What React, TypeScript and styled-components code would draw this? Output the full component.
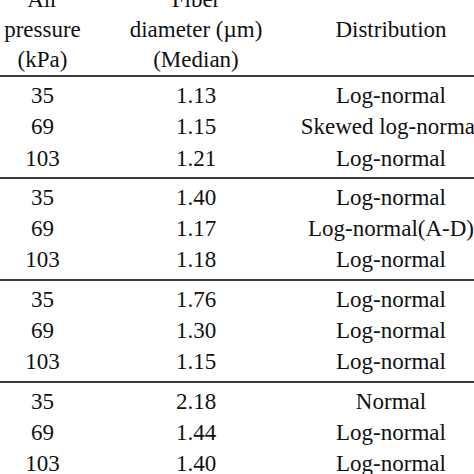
import styled, { createGlobalStyle } from "styled-components";

const GlobalStyle = createGlobalStyle`
  html, body {
    margin: 0;
    padding: 0;
    background: #ffffff;
    overflow: hidden;
  }
`;

const cols = "85px 222px 168px";

const Table = styled.div`
  width: 474px;
  height: 474px;
  overflow: hidden;
  display: flex;
  flex-direction: column;
  font-family: "Liberation Serif", "Times New Roman", Times, serif;
  color: #111111;
`;

const Header = styled.div`
  display: grid;
  grid-template-columns: ${cols};
  margin-top: -15px;
  height: 90px;
  border-bottom: 2px solid #3a3a3a;
  font-size: 23px;
  line-height: 30px;
`;

const HeadCell = styled.div`
  display: flex;
  flex-direction: column;
  align-items: center;
  justify-content: center;
  white-space: nowrap;
`;

const Group = styled.div<{ $last?: boolean }>`
  padding: 3px 0;
  border-bottom: ${(p) => (p.$last ? "none" : "2px solid #3a3a3a")};
`;

const Row = styled.div`
  display: grid;
  grid-template-columns: ${cols};
  height: 31.3px;
  font-size: 23px;
  line-height: 31px;
`;

const Cell = styled.div`
  display: flex;
  justify-content: center;
  white-space: nowrap;
`;

type Entry = [string, string, string];

const groups: Entry[][] = [
  [
    ["35", "1.13", "Log-normal"],
    ["69", "1.15", "Skewed log-normal"],
    ["103", "1.21", "Log-normal"],
  ],
  [
    ["35", "1.40", "Log-normal"],
    ["69", "1.17", "Log-normal(A-D)"],
    ["103", "1.18", "Log-normal"],
  ],
  [
    ["35", "1.76", "Log-normal"],
    ["69", "1.30", "Log-normal"],
    ["103", "1.15", "Log-normal"],
  ],
  [
    ["35", "2.18", "Normal"],
    ["69", "1.44", "Log-normal"],
    ["103", "1.40", "Log-normal"],
  ],
];

export default function App() {
  return (
    <>
      <GlobalStyle />
      <Table>
        <Header>
          <HeadCell>
            <span>Air</span>
            <span>pressure</span>
            <span>(kPa)</span>
          </HeadCell>
          <HeadCell>
            <span>Fiber</span>
            <span>diameter (µm)</span>
            <span>(Median)</span>
          </HeadCell>
          <HeadCell>
            <span>Distribution</span>
          </HeadCell>
        </Header>
        {groups.map((g, i) => (
          <Group key={i} $last={i === groups.length - 1}>
            {g.map((r, j) => (
              <Row key={j}>
                <Cell>{r[0]}</Cell>
                <Cell>{r[1]}</Cell>
                <Cell>{r[2]}</Cell>
              </Row>
            ))}
          </Group>
        ))}
      </Table>
    </>
  );
}
